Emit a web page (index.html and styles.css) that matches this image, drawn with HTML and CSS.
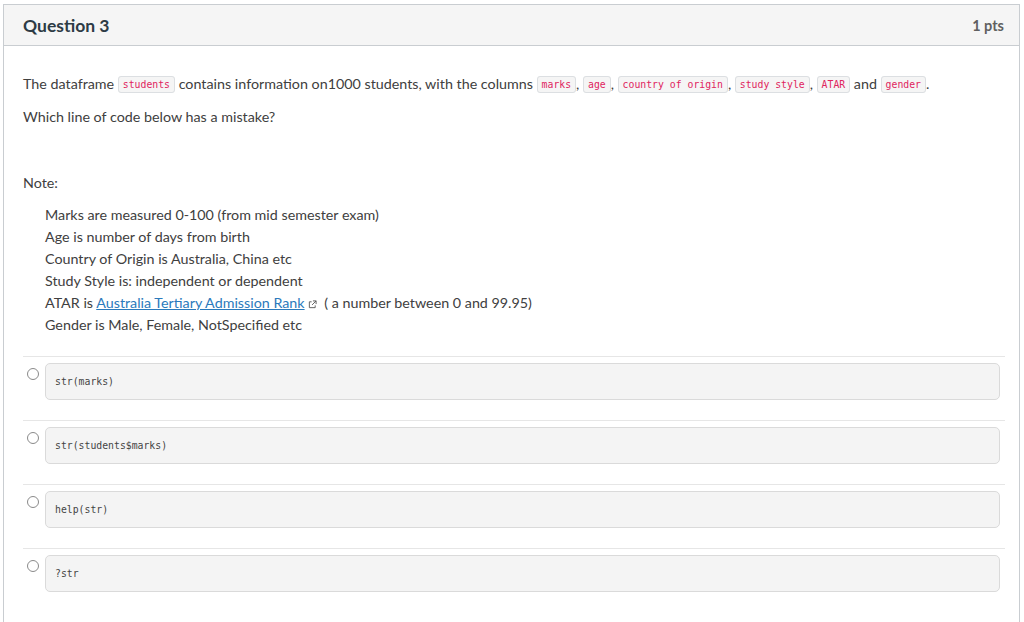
FILE: index.html
```html
<!DOCTYPE html>
<html>
<head>
<meta charset="utf-8">
<link rel="stylesheet" href="styles.css">
</head>
<body>
<div class="question">
  <div class="q-header">
    <h2 class="q-title">Question 3</h2>
    <span class="q-pts">1 pts</span>
  </div>
  <div class="q-body">
    <p class="para first">The dataframe <code class="ic">students</code> contains information on1000 students, with the columns <code class="ic">marks</code>, <code class="ic">age</code>, <code class="ic">country of origin</code>, <code class="ic">study style</code>, <code class="ic">ATAR</code> and <code class="ic">gender</code>.</p>
    <p class="para">Which line of code below has a mistake?</p>
    <p class="para note">Note:</p>
    <ul class="notes">
      <li>Marks are measured 0-100 (from mid semester exam)</li>
      <li>Age is number of days from birth</li>
      <li>Country of Origin is Australia, China etc</li>
      <li>Study Style is: independent or dependent</li>
      <li>ATAR is <a class="link" href="#">Australia Tertiary Admission Rank</a><svg class="ext" width="9" height="9" viewBox="0 0 10 10"><path d="M4 2H1.5v6.5H8V6" fill="none" stroke="#555" stroke-width="1"/><path d="M5.5 1H9v3.5M9 1L4.5 5.5" fill="none" stroke="#555" stroke-width="1"/></svg> ( a number between 0 and 99.95)</li>
      <li>Gender is Male, Female, NotSpecified etc</li>
    </ul>
  </div>
  <div class="answers">
    <div class="answer"><span class="radio"></span><div class="code">str(marks)</div></div>
    <div class="answer"><span class="radio"></span><div class="code">str(students$marks)</div></div>
    <div class="answer"><span class="radio"></span><div class="code">help(str)</div></div>
    <div class="answer"><span class="radio"></span><div class="code">?str</div></div>
  </div>
</div>
</body>
</html>
```

FILE: styles.css
```css
html, body {
  margin: 0;
  padding: 0;
  background: #ffffff;
}
body {
  font-family: Lato, "Open Sans", "Liberation Sans", sans-serif;
  color: #404040;
  padding: 4px 4px 0 3px;
}
.question {
  border: 1px solid #c9cdd1;
  border-bottom: none;
  height: 640px;
  box-sizing: border-box;
}
.q-header {
  display: flex;
  align-items: center;
  justify-content: space-between;
  height: 40px;
  padding: 0 15px 0 19px;
  background: #f5f5f5;
  border-bottom: 1px solid #c9cdd1;
}
.q-title {
  margin: 0;
  font-size: 17.5px;
  font-weight: 700;
  color: #2d3b45;
}
.q-pts {
  font-size: 14.5px;
  font-weight: 700;
  color: #606060;
}
.q-body {
  padding: 0 19px;
  font-size: 14.3px;
}
.para {
  margin: 0;
  line-height: 20px;
}
.para.first {
  margin-top: 28px;
}
.para + .para {
  margin-top: 12px;
}
.para.note {
  margin-top: 46px;
}
.ic {
  font-family: "DejaVu Sans Mono", "Liberation Mono", monospace;
  font-size: 9.8px;
  color: #e0245e;
  background: #f5f5f5;
  border: 1px solid #dcdfe2;
  border-radius: 3px;
  padding: 2px 4px;
  vertical-align: 1px;
}
.notes {
  list-style: none;
  margin: 11px 0 0 0;
  padding: 0 0 0 22px;
}
.notes li {
  line-height: 22px;
}
.link {
  color: #2b7abc;
  text-decoration: underline;
}
.ext {
  margin: 0 4px 0 3px;
  vertical-align: -1px;
}
.answers {
  margin: 20px 14px 0 19px;
}
.answer {
  display: flex;
  align-items: flex-start;
  border-top: 1px solid #e6e6e6;
  padding: 6px 0 20px 0;
  gap: 6px;
}
.radio {
  flex: none;
  width: 10px;
  height: 10px;
  border: 1px solid #8a8a8a;
  border-radius: 50%;
  margin: 5px 0 0 4px;
}
.code {
  flex: none;
  width: 955px;
  height: 37px;
  box-sizing: border-box;
  background: #f4f4f4;
  border: 1px solid #dadada;
  border-radius: 5px;
  padding: 0 9px;
  display: flex;
  align-items: center;
  font-family: "DejaVu Sans Mono", "Liberation Mono", monospace;
  font-size: 9.8px;
  color: #444;
}
```
